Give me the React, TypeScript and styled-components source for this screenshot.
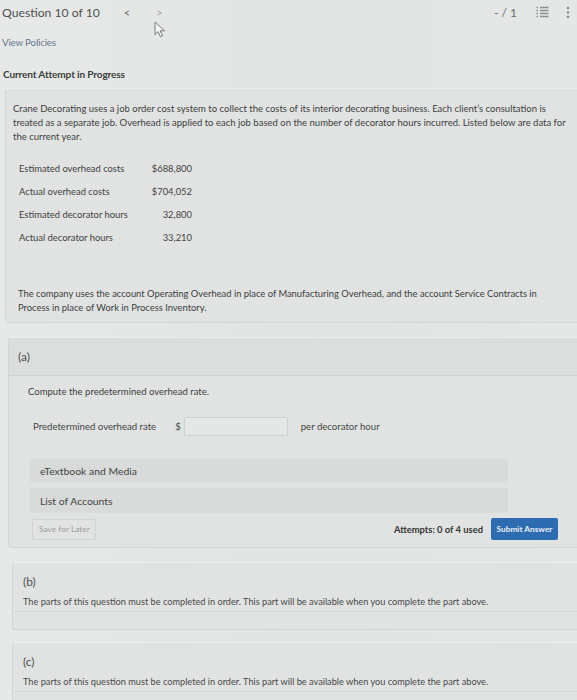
import React from "react";
import styled, { createGlobalStyle } from "styled-components";

const GlobalStyle = createGlobalStyle`
  html, body {
    margin: 0;
    padding: 0;
    background: #e3e5e4;
  }
  body {
    font-family: Lato, "Open Sans", sans-serif;
    color: #3b3d3c;
  }
`;

const Page = styled.div`
  position: relative;
  width: 577px;
  height: 700px;
  overflow: hidden;
  background: linear-gradient(90deg, #e7e9e8 0%, #e2e4e3 55%, #e5e7e6 100%);
`;

const Header = styled.div`
  display: flex;
  align-items: center;
  height: 24px;
  padding-left: 2px;
`;

const Title = styled.div`
  font-size: 12.2px;
  color: #4f5150;
`;

const Chevron = styled.span<{ $faded?: boolean }>`
  font-size: 11px;
  color: ${(p) => (p.$faded ? "#a6a8a7" : "#676968")};
  margin-left: ${(p) => (p.$faded ? "26px" : "24px")};
`;

const Spacer = styled.div`
  flex: 1;
`;

const Score = styled.span`
  font-size: 12px;
  color: #676968;
  margin-right: 19px;
`;

const HeaderIcon = styled.span<{ $gap: number }>`
  display: flex;
  align-items: center;
  margin-right: ${(p) => p.$gap}px;
  color: #8c8e8f;
`;

const Cursor = styled.svg`
  position: absolute;
  left: 154px;
  top: 21px;
`;

const PolicyLink = styled.div`
  margin-top: 11px;
  padding-left: 2px;
  font-size: 9.8px;
  line-height: 14px;
  color: #64768f;
  letter-spacing: -0.2px;
`;

const AttemptLabel = styled.div`
  margin-top: 18px;
  padding-left: 3px;
  font-size: 10.1px;
  line-height: 14px;
  font-weight: 700;
  color: #3d3f3e;
  letter-spacing: -0.15px;
`;

const Card = styled.section<{ $top: number; $left: number }>`
  margin: ${(p) => p.$top}px 0 0 ${(p) => p.$left}px;
  border: 1px solid #d4d6d5;
  border-top-color: #eceeed;
  border-right: none;
  border-radius: 3px 0 0 3px;
  background: #e1e3e2;
  box-sizing: border-box;
`;

const Para = styled.p<{ $left: number; $size: number; $top: number }>`
  margin: 0;
  padding: ${(p) => p.$top}px 0 0 ${(p) => p.$left}px;
  font-size: ${(p) => p.$size}px;
  line-height: 14px;
  white-space: nowrap;
  color: #3c3e3d;
`;

const DataTable = styled.div`
  display: grid;
  grid-template-columns: 123px 50px;
  row-gap: 10px;
  padding: 18px 0 0 13px;
`;

const DataCell = styled.div<{ $right?: boolean }>`
  font-size: 9.4px;
  line-height: 13px;
  text-align: ${(p) => (p.$right ? "right" : "left")};
  color: #3f4140;
`;

const NoteBlock = styled.div`
  padding: 43px 0 7px;
`;

const PartHead = styled.div<{ $left: number; $bottom: number; $dark?: boolean }>`
  padding: 11px 0 ${(p) => p.$bottom}px ${(p) => p.$left}px;
  font-size: 12px;
  line-height: 16px;
  color: #4e504f;
  background: ${(p) => (p.$dark ? "#dcdedd" : "transparent")};
  border-bottom: ${(p) => (p.$dark ? "1px solid #d0d2d1" : "none")};
`;

const PartBody = styled.div`
  padding: 9px 0 0 19px;
`;

const Prompt = styled.div`
  font-size: 9.5px;
  line-height: 14px;
  color: #3c3e3d;
`;

const AnswerRow = styled.div`
  display: flex;
  align-items: center;
  height: 20px;
  margin-top: 17px;
  padding-left: 5px;
  font-size: 9.6px;
  color: #434544;
`;

const Currency = styled.span`
  margin-left: 19px;
  margin-right: 3px;
`;

const AnswerInput = styled.div`
  width: 104px;
  height: 19px;
  box-sizing: border-box;
  border: 1px solid #cdd0cf;
  border-radius: 1px;
  background: #e5e7e6;
  margin-right: 13px;
`;

const Resource = styled.div<{ $top: number; $height: number }>`
  width: 478px;
  height: ${(p) => p.$height}px;
  box-sizing: border-box;
  margin: ${(p) => p.$top}px 0 0 2px;
  padding-left: 10px;
  display: flex;
  align-items: center;
  border-radius: 3px;
  background: #d9dbda;
  font-size: 10.4px;
  color: #414342;
`;

const ActionRow = styled.div`
  display: flex;
  align-items: center;
  height: 22px;
  padding: 5px 19px 7px 23px;
`;

const SaveButton = styled.div`
  width: 64px;
  height: 21px;
  box-sizing: border-box;
  border: 1px solid #d2d4d3;
  border-radius: 2px;
  font-size: 8.4px;
  color: #9c9e9d;
  display: flex;
  align-items: center;
  padding-left: 6px;
`;

const AttemptsText = styled.span`
  font-size: 9.4px;
  font-weight: 700;
  color: #333534;
  margin-right: 8px;
`;

const SubmitButton = styled.div`
  width: 67px;
  height: 22px;
  border-radius: 2px;
  background: #2e6cb2;
  color: #e9eef6;
  font-size: 8.3px;
  font-weight: 700;
  display: flex;
  align-items: center;
  justify-content: center;
`;

const LockedText = styled.div`
  font-size: 9.2px;
  line-height: 12px;
  white-space: nowrap;
  color: #484a49;
  padding: 6px 0 0 10px;
`;

const LockedFoot = styled.div`
  margin-top: 3px;
  height: 17px;
  border-top: 1px solid #d4d6d5;
`;

const rows = [
  ["Estimated overhead costs", "$688,800"],
  ["Actual overhead costs", "$704,052"],
  ["Estimated decorator hours", "32,800"],
  ["Actual decorator hours", "33,210"],
];

const ListIcon = () => (
  <svg width="13" height="12" viewBox="0 0 13 12" fill="none" stroke="currentColor" strokeWidth="1.3">
    <path d="M0.5 1.5h1.5M0.5 4.5h1.5M0.5 7.5h1.5M0.5 10.5h1.5M4 1.5h8.5M4 4.5h8.5M4 7.5h8.5M4 10.5h8.5" />
  </svg>
);

const DotsIcon = () => (
  <svg width="4" height="13" viewBox="0 0 4 13" fill="currentColor">
    <circle cx="2" cy="2" r="1.3" />
    <circle cx="2" cy="6.5" r="1.3" />
    <circle cx="2" cy="11" r="1.3" />
  </svg>
);

const LockedPart = ({ label, top }: { label: string; top: number }) => (
  <Card $top={top} $left={12}>
    <PartHead $left={10} $bottom={0}>
      {label}
    </PartHead>
    <LockedText>
      The parts of this question must be completed in order. This part will be available when you complete the part above.
    </LockedText>
    <LockedFoot />
  </Card>
);

export default function App() {
  return (
    <>
      <GlobalStyle />
      <Page>
        <Header>
          <Title>Question 10 of 10</Title>
          <Chevron>&lt;</Chevron>
          <Chevron $faded>&gt;</Chevron>
          <Spacer />
          <Score>- / 1</Score>
          <HeaderIcon $gap={17}>
            <ListIcon />
          </HeaderIcon>
          <HeaderIcon $gap={7}>
            <DotsIcon />
          </HeaderIcon>
        </Header>
        <Cursor width="12" height="17" viewBox="0 0 12 17">
          <path d="M1 1v12.5l3-2.8 2.4 5 2.1-1-2.4-4.9H10.5z" fill="#f3f4f4" stroke="#6c6e6e" strokeWidth="0.9" strokeLinejoin="round" />
        </Cursor>

        <PolicyLink>View Policies</PolicyLink>
        <AttemptLabel>Current Attempt in Progress</AttemptLabel>

        <Card $top={7} $left={5}>
          <Para $left={7} $size={9.5} $top={13}>
            Crane Decorating uses a job order cost system to collect the costs of its interior decorating business. Each client’s consultation is
            <br />
            treated as a separate job. Overhead is applied to each job based on the number of decorator hours incurred. Listed below are data for
            <br />
            the current year.
          </Para>
          <DataTable>
            {rows.map(([label, value]) => (
              <React.Fragment key={label}>
                <DataCell>{label}</DataCell>
                <DataCell $right>{value}</DataCell>
              </React.Fragment>
            ))}
          </DataTable>
          <NoteBlock>
            <Para $left={12} $size={9.4} $top={0}>
              The company uses the account Operating Overhead in place of Manufacturing Overhead, and the account Service Contracts in
              <br />
              Process in place of Work in Process Inventory.
            </Para>
          </NoteBlock>
        </Card>

        <Card $top={14} $left={8}>
          <PartHead $left={9} $bottom={10} $dark>
            (a)
          </PartHead>
          <PartBody>
            <Prompt>Compute the predetermined overhead rate.</Prompt>
            <AnswerRow>
              Predetermined overhead rate
              <Currency>$</Currency>
              <AnswerInput />
              per decorator hour
            </AnswerRow>
            <Resource $top={23} $height={24}>
              eTextbook and Media
            </Resource>
            <Resource $top={5} $height={25}>
              List of Accounts
            </Resource>
          </PartBody>
          <ActionRow>
            <SaveButton>Save for Later</SaveButton>
            <Spacer />
            <AttemptsText>Attempts: 0 of 4 used</AttemptsText>
            <SubmitButton>Submit Answer</SubmitButton>
          </ActionRow>
        </Card>

        <LockedPart label="(b)" top={14} />
        <LockedPart label="(c)" top={12} />
      </Page>
    </>
  );
}
